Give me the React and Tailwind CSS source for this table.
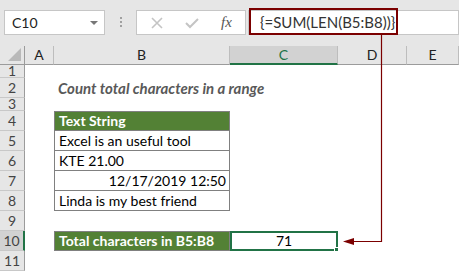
import React from "react";

const font = { fontFamily: "Lato, 'Liberation Sans', sans-serif" };

const cols = ["A", "B", "C", "D", "E"];

const RowHead = ({ n, sel }) => (
  <div
    className={`flex items-center justify-center border-b border-[#c8c8c8] text-[14px] leading-none text-[#444] ${
      sel ? "bg-[#d2d2d2] border-r-2 border-r-[#217346]" : "bg-[#e6e6e6] border-r border-r-[#9b9b9b]"
    }`}
  >
    {n}
  </div>
);

const Empty = ({ span = "col-span-5" }) => <div className={span} />;

const cell = "flex items-center overflow-hidden whitespace-nowrap text-[14px] leading-none";

export default function App() {
  return (
    <div className="relative w-[459px] h-[272px] overflow-hidden bg-white" style={font}>
      {/* toolbar */}
      <div className="flex h-[46px] items-start bg-[#e6e6e6] pt-[10px]">
        <div className="ml-[4px] flex h-[25px] w-[101px] items-center justify-between border border-[#c6c6c6] bg-white pl-[7px] pr-[6px] text-[14px] text-[#222]">
          <span>C10</span>
          <span className="h-0 w-0 border-x-[4px] border-t-[4px] border-x-transparent border-t-[#777]" />
        </div>
        <div className="ml-[15px] mt-[7px] flex flex-col gap-[2px]">
          <span className="h-[2px] w-[2px] bg-[#a0a0a0]" />
          <span className="h-[2px] w-[2px] bg-[#a0a0a0]" />
          <span className="h-[2px] w-[2px] bg-[#a0a0a0]" />
        </div>
        <div className="ml-[14px] flex h-[25px] w-[110px] items-center border border-[#c6c6c6] bg-white">
          <svg className="ml-[14px]" width="12" height="12" viewBox="0 0 12 12">
            <path d="M1 1L11 11M11 1L1 11" stroke="#c4c4c4" strokeWidth="1.6" />
          </svg>
          <svg className="ml-[22px]" width="14" height="12" viewBox="0 0 14 12">
            <path d="M1 6L5 10L13 2" stroke="#c4c4c4" strokeWidth="2" fill="none" />
          </svg>
          <span
            className="ml-[22px] text-[15px] italic text-[#555]"
            style={{ fontFamily: "'Liberation Serif', serif" }}
          >
            fx
          </span>
        </div>
        <div className="ml-[2px] flex h-[25px] flex-1 items-center border border-[#c6c6c6] bg-white pl-[11px] text-[15px] text-[#333]">
          {"{=SUM(LEN(B5:B8))}"}
        </div>
      </div>

      {/* sheet */}
      <div className="grid grid-cols-[25px_29px_176px_108px_69px_1fr] grid-rows-[19px_13px_20px_13px_20px_20px_20px_20px_20px_20px_20px_20px]">
        {/* column headers */}
        <div className="relative border-b border-r border-[#9b9b9b] bg-[#e6e6e6]">
          <span
            className="absolute bottom-[3px] right-[3px] h-0 w-0"
            style={{ borderBottom: "13px solid #b9b9b9", borderLeft: "13px solid transparent" }}
          />
        </div>
        {cols.map((c) => (
          <div
            key={c}
            className={`flex items-center justify-center border-r text-[14px] leading-none ${
              c === "C"
                ? "border-b-2 border-b-[#217346] border-r-[#bdbdbd] bg-[#d2d2d2] text-[#217346]"
                : "border-b border-b-[#9b9b9b] border-r-[#bdbdbd] bg-[#e6e6e6] text-[#222]"
            }`}
          >
            {c}
          </div>
        ))}

        {/* row 1 */}
        <RowHead n="1" />
        <Empty />

        {/* row 2 */}
        <RowHead n="2" />
        <div />
        <div className={`${cell} col-span-4 pl-[4px] text-[15px] font-bold italic text-[#595959]`}>
          Count total characters in a range
        </div>

        {/* row 3 */}
        <RowHead n="3" />
        <Empty />

        {/* row 4 */}
        <RowHead n="4" />
        <div />
        <div className={`${cell} border border-[#808080] bg-[#538135] pl-[4px] font-bold text-white`}>
          Text String
        </div>
        <Empty span="col-span-3" />

        {/* rows 5-8 */}
        <RowHead n="5" />
        <div />
        <div className={`${cell} border-x border-b border-[#808080] pl-[4px] text-black`}>
          Excel is an useful tool
        </div>
        <Empty span="col-span-3" />

        <RowHead n="6" />
        <div />
        <div className={`${cell} border-x border-b border-[#808080] pl-[4px] text-black`}>
          KTE 21.00
        </div>
        <Empty span="col-span-3" />

        <RowHead n="7" />
        <div />
        <div className={`${cell} justify-end border-x border-b border-[#808080] pr-[3px] text-black`}>
          12/17/2019 12:50
        </div>
        <Empty span="col-span-3" />

        <RowHead n="8" />
        <div />
        <div className={`${cell} border-x border-b border-[#808080] pl-[4px] text-black`}>
          Linda is my best friend
        </div>
        <Empty span="col-span-3" />

        {/* row 9 */}
        <RowHead n="9" />
        <Empty />

        {/* row 10 */}
        <RowHead n="10" sel />
        <div />
        <div className={`${cell} border border-[#808080] bg-[#538135] pl-[4px] font-bold text-white`}>
          Total characters in B5:B8
        </div>
        <div className={`${cell} relative justify-center overflow-visible border-2 border-[#217346] text-black`}>
          71
          <span className="absolute -bottom-[3px] -right-[3px] h-[5px] w-[5px] border border-white bg-[#217346]" />
        </div>
        <Empty span="col-span-2" />

        {/* row 11 */}
        <RowHead n="11" />
        <Empty />
      </div>

      {/* callout: formula box and connector arrow */}
      <div className="absolute left-[249px] top-[8px] h-[27px] w-[149px] border-2 border-[#7b0000]" />
      <svg className="absolute left-0 top-0" width="459" height="272" viewBox="0 0 459 272">
        <path d="M381.5 35V241.5H352" stroke="#7b0000" strokeWidth="1.2" fill="none" />
        <path d="M343 241.5L354 238V245Z" fill="#7b0000" />
      </svg>
    </div>
  );
}
